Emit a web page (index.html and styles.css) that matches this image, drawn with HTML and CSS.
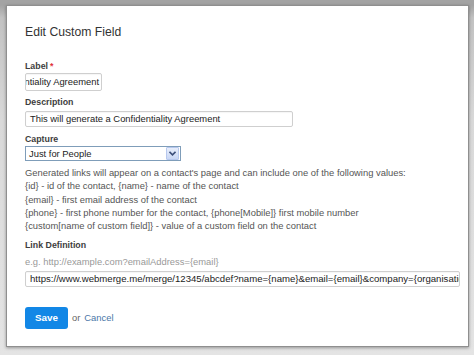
FILE: index.html
```html
<!DOCTYPE html>
<html lang="en">
<head>
  <meta charset="UTF-8" />
  <title>Edit Custom Field</title>
  <link rel="stylesheet" href="styles.css">
</head>
<body>
  <div class="dialog">
    <div class="dialog-title">Edit Custom Field</div>

    <div class="field-label label-first">Label<span class="required">*</span></div>
    <div class="text-input input-short"><span>Confidentiality Agreement</span></div>

    <div class="field-label label-desc">Description</div>
    <div class="text-input input-desc">This will generate a Confidentiality Agreement</div>

    <div class="field-label label-capture">Capture</div>
    <div class="select-box">
      <span>Just for People</span>
      <span class="select-arrow">
        <svg width="7" height="5" viewBox="0 0 7 5"><path d="M0.5 0.8 L3.5 3.8 L6.5 0.8" fill="none" stroke="#3c4f7a" stroke-width="1.6"/></svg>
      </span>
    </div>

    <div class="help-text">
      Generated links will appear on a contact's page and can include one of the following values:<br>
      {id} - id of the contact, {name} - name of the contact<br>
      {email} - first email address of the contact<br>
      {phone} - first phone number for the contact, {phone[Mobile]} first mobile number<br>
      {custom[name of custom field]} - value of a custom field on the contact
    </div>

    <div class="field-label label-link">Link Definition</div>
    <div class="hint">e.g. http://example.com?emailAddress={email}</div>
    <div class="text-input input-link">https://www.webmerge.me/merge/12345/abcdef?name={name}&amp;email={email}&amp;company={organisation}</div>

    <div class="actions">
      <button class="btn-save">Save</button>
      <span class="or">or</span>
      <a class="cancel" href="#">Cancel</a>
    </div>
  </div>
</body>
</html>
```

FILE: styles.css
```css
body {
  margin: 0;
  height: 355px;
  overflow: hidden;
  background: linear-gradient(to bottom, #a3a3a3 0, #a3a3a3 5px, #c2c2c2 18px, #d9d9d9 120px, #e4e4e4 100%);
  font-family: "Liberation Sans", Arial, sans-serif;
  color: #333;
}

.dialog {
  box-sizing: border-box;
  margin: 5px 0 0 6px;
  width: 463px;
  height: 342px;
  padding: 18px 0 0 18px;
  background: #fff;
  border: 1px solid #8f8f8f;
  box-shadow: 0 1px 3px rgba(0, 0, 0, 0.35);
  overflow: hidden;
}

.dialog-title {
  font-size: 12.2px;
  line-height: 16px;
  color: #333;
}

.field-label {
  font-size: 8.8px;
  font-weight: bold;
  line-height: 12px;
  color: #3d3d3d;
}

.required {
  color: #e0323a;
  margin-left: 2px;
}

.label-first { margin-top: 20px; }
.label-desc { margin-top: 5px; }
.label-capture { margin-top: 6px; }
.label-link { margin-top: 6.5px; }

.text-input {
  box-sizing: border-box;
  height: 16px;
  margin-top: 3px;
  padding: 0 4px;
  border: 1px solid #cfcfcf;
  border-radius: 2px;
  font-size: 9.4px;
  line-height: 14px;
  color: #222;
  white-space: nowrap;
  overflow: hidden;
  box-shadow: inset 0 1px 1px rgba(0, 0, 0, 0.04);
}

.input-short {
  width: 77px;
  height: 18px;
  margin-top: 1px;
  line-height: 16px;
  padding: 0 2px;
  display: flex;
  justify-content: flex-end;
}

.input-short span {
  flex-shrink: 0;
}

.input-desc {
  width: 268px;
}

.input-link {
  width: 435px;
  margin-top: 2.4px;
  font-size: 9.6px;
}

.select-box {
  box-sizing: border-box;
  width: 156px;
  height: 15px;
  margin-top: 1px;
  padding-left: 3px;
  border: 1px solid #7f9db9;
  display: flex;
  align-items: center;
  justify-content: space-between;
  font-size: 9.4px;
  color: #222;
}

.select-arrow {
  width: 11px;
  height: 11px;
  margin-right: 1px;
  display: flex;
  align-items: center;
  justify-content: center;
  background: linear-gradient(to bottom, #e8eefb, #c9d7f5);
  border: 1px solid #b7c8ee;
  border-radius: 1px;
}

.help-text {
  margin-top: 4.8px;
  font-size: 9.4px;
  line-height: 13.4px;
  color: #555;
}

.hint {
  margin-top: 4px;
  font-size: 9.4px;
  line-height: 13px;
  color: #999;
}

.actions {
  margin-top: 20px;
  display: flex;
  align-items: center;
  gap: 4px;
  font-size: 9.4px;
}

.btn-save {
  width: 43px;
  height: 22px;
  padding: 0;
  border: none;
  border-radius: 3px;
  background: #1287e6;
  color: #fff;
  font-family: "Liberation Sans", Arial, sans-serif;
  font-size: 9.9px;
  font-weight: bold;
}

.or {
  color: #666;
}

.cancel {
  color: #4a77a8;
  text-decoration: none;
}
```
